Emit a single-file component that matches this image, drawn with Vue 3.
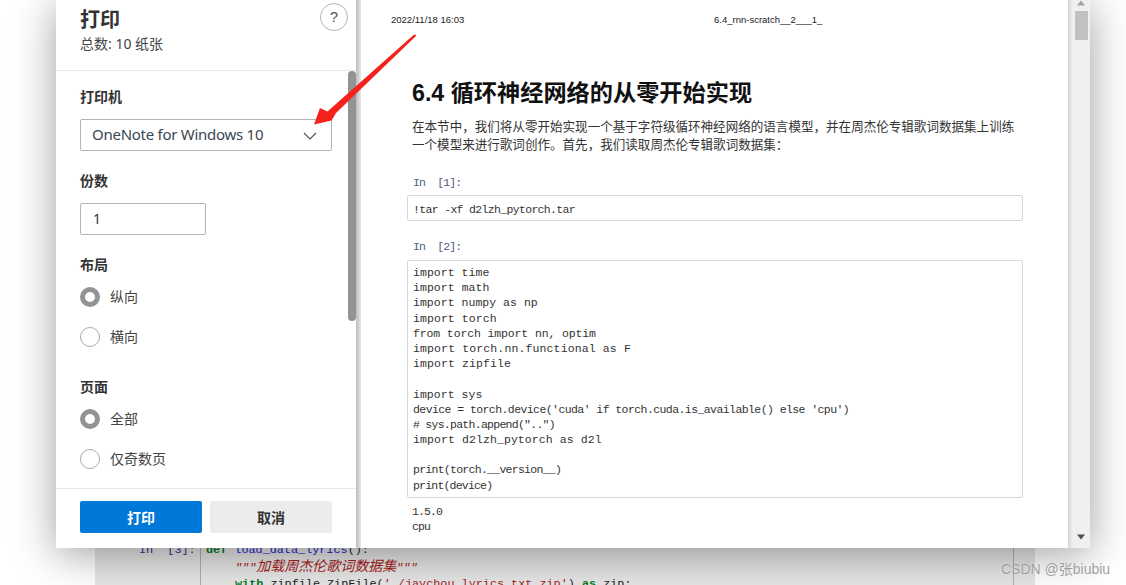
<script setup>
// Each source line with the x position where its text ends in the preview;
// letter-spacing is derived from that.
const baseAdvance = 6.9
const startX = 413
const codeLines = [
  ['import time', 489.3],
  ['import math', 489.5],
  ['import numpy as np', 537.7],
  ['import torch', 496.7],
  ['from torch import nn, optim', 595.7],
  ['import torch.nn.functional as F', 631],
  ['import zipfile', 511],
  ['', 0],
  ['import sys', 482.3],
  ["device = torch.device('cuda' if torch.cuda.is_available() else 'cpu')", 849],
  ['# sys.path.append("..")', 555],
  ['import d2lzh_pytorch as d2l', 601.7],
  ['', 0],
  ['print(torch.__version__)', 561],
  ['print(device)', 492.3]
].map(([text, end]) => ({
  text,
  spacing: text ? ((end - startX) / text.length - baseAdvance).toFixed(2) + 'px' : '0'
}))
</script>

<template>
  <div class="stage">
    <div class="back-page">
      <div class="back-code">
        <div class="back-prompt">In&nbsp;&nbsp;[3]:</div>
        <div class="back-src">
          <div><b class="kw">def</b> <span class="fn">load_data_lyrics</span>():</div>
          <div class="doc">"""<span class="doc-cjk">加载周杰伦歌词数据集</span>"""</div>
          <div class="ind"><b class="kw">with</b> zipfile.ZipFile(<span class="str">'./jaychou_lyrics.txt.zip'</span>) <b class="kw">as</b> zip:</div>
        </div>
      </div>
    </div>

    <div class="dialog">
      <aside class="panel">
        <header class="head">
          <div class="head-text">
            <h1 class="title">打印</h1>
            <div class="sub">总数: 10 纸张</div>
          </div>
          <div class="help">?</div>
        </header>
        <div class="body">
          <div class="label">打印机</div>
          <div class="select">
            <span class="select-text">OneNote for Windows 10</span>
            <svg class="chev" width="14" height="8" viewBox="0 0 14 8"><path d="M1 1l6 6 6-6" fill="none" stroke="#555" stroke-width="1.2"/></svg>
          </div>
          <div class="label">份数</div>
          <div class="input">1</div>
          <div class="label">布局</div>
          <div class="radios">
            <div class="radio-row"><i class="radio on"></i>纵向</div>
            <div class="radio-row"><i class="radio"></i>横向</div>
          </div>
          <div class="label wide">页面</div>
          <div class="radios">
            <div class="radio-row"><i class="radio on"></i>全部</div>
            <div class="radio-row"><i class="radio"></i>仅奇数页</div>
          </div>
          <div class="thumb"></div>
        </div>
        <footer class="foot">
          <button class="btn primary">打印</button>
          <button class="btn">取消</button>
        </footer>
      </aside>

      <div class="gutter"></div>

      <main class="preview">
        <div class="page-head">
          <span class="date">2022/11/18 16:03</span>
          <span class="doc-name">6.4_rnn-scratch__2___1_</span>
        </div>
        <h2 class="h-main">6.4 循环神经网络的从零开始实现</h2>
        <p class="para">在本节中，我们将从零开始实现一个基于字符级循环神经网络的语言模型，并在周杰伦专辑歌词数据集上训练一个模型来进行歌词创作。首先，我们读取周杰伦专辑歌词数据集：</p>
        <div class="prompt first">In&nbsp;&nbsp;[1]:</div>
        <div class="cell single">!tar -xf d2lzh_pytorch.tar</div>
        <div class="prompt second">In&nbsp;&nbsp;[2]:</div>
        <div class="cell multi">
          <div
            v-for="(line, i) in codeLines"
            :key="i"
            class="code-line"
            :style="{ letterSpacing: line.spacing }"
          >{{ line.text }}</div>
        </div>
        <div class="output">
          <div>1.5.0</div>
          <div>cpu</div>
        </div>
      </main>

      <div class="scrollbar">
        <svg width="10" height="6" viewBox="0 0 10 6" class="arrow-up"><path d="M5 0.5L9 5.5H1z" fill="#a3a3a3"/></svg>
        <div class="sb-thumb"></div>
        <svg width="10" height="6" viewBox="0 0 10 6" class="arrow-down"><path d="M1 .5h8L5 5.5z" fill="#505050"/></svg>
      </div>
    </div>

    <svg class="red-arrow" width="120" height="100" viewBox="310 30 120 100">
      <path d="M415.5 34.5L416 36L336 113L331.5 120.5L314 124.5L320 108L327.5 111.5L413.5 35z" fill="#f5221b"/>
    </svg>

    <div class="watermark">CSDN @张biubiu</div>
  </div>
</template>

<style>
html, body { margin: 0; background: #fff; }
</style>

<style scoped>
.stage {
  position: relative;
  width: 1126px;
  height: 585px;
  overflow: hidden;
  background: #fff;
  font-family: "Noto Sans", "Noto Sans CJK SC", sans-serif;
  color: #333;
}
.back-page {
  margin-left: 95px;
  width: 940px;
  height: 585px;
  background: #e6e6e6;
  box-sizing: border-box;
  padding-top: 542px;
}
.back-code {
  display: flex;
  font: 11.8px/16.5px "Liberation Mono", "Noto Sans CJK SC", monospace;
}
.back-prompt {
  width: 105px;
  flex: none;
  box-sizing: border-box;
  padding: 0 5px 0 44px;
  color: #26378c;
  white-space: nowrap;
}
.back-src {
  width: 814px;
  height: 60px;
  box-sizing: border-box;
  border-left: 1px solid #b0b0b0;
  border-right: 1px solid #b0b0b0;
  padding-left: 5px;
  color: #222;
  white-space: nowrap;
}
.kw { color: #0a7a2a; }
.fn { color: #1a1ad0; }
.doc { color: #a81c1c; font-style: italic; padding-left: 29px; }
.doc-cjk { font-size: 14px; }
.str { color: #a81c1c; }
.ind { padding-left: 29px; }

.dialog {
  position: absolute;
  left: 56px;
  top: 0;
  width: 1034px;
  height: 548px;
  display: flex;
  background: #fff;
  box-shadow: 0 6px 40px rgba(0, 0, 0, .38);
}
.panel {
  width: 300px;
  flex: none;
  display: flex;
  flex-direction: column;
  position: relative;
  background: #fff;
}
.gutter {
  width: 5px;
  flex: none;
  background: linear-gradient(90deg, #bdbdbd, #e6e6e6);
}
.head {
  height: 71px;
  box-sizing: border-box;
  padding: 7px 8px 0 24px;
  display: flex;
  justify-content: space-between;
  align-items: flex-start;
  border-bottom: 1px solid #e8e8e8;
  flex: none;
}
.title {
  margin: 0;
  font-size: 20px;
  line-height: 26px;
  font-weight: 700;
}
.sub {
  font-size: 14px;
  line-height: 20px;
  margin-top: 1px;
  color: #444;
}
.help {
  width: 26px;
  height: 26px;
  border: 1px solid #b4b4b4;
  border-radius: 50%;
  margin-top: -4px;
  text-align: center;
  font: 15px/26px "Liberation Sans", sans-serif;
  color: #555;
}
.body {
  flex: 1;
  min-height: 0;
  position: relative;
  padding: 16px 24px 0;
  box-sizing: border-box;
}
.label {
  font-size: 14px;
  line-height: 20px;
  font-weight: 700;
  margin: 20px 0 12px;
}
.label:first-child { margin-top: 0; }
.label.wide { margin-top: 30px; }
.select {
  width: 252px;
  height: 32px;
  box-sizing: border-box;
  border: 1px solid #b4b4b4;
  border-radius: 2px;
  display: flex;
  align-items: center;
  justify-content: space-between;
  padding: 0 14px 0 11px;
  font-size: 15px;
  letter-spacing: -.27px;
  color: #3b4650;
}
.select-text { margin-top: -2px; }
.chev { margin-top: 2px; }
.input {
  width: 126px;
  height: 32px;
  box-sizing: border-box;
  border: 1px solid #b4b4b4;
  border-radius: 2px;
  padding-left: 12px;
  font-size: 14px;
  line-height: 30px;
}
.radios {
  display: flex;
  flex-direction: column;
  gap: 20px;
}
.radio-row {
  display: flex;
  align-items: center;
  gap: 10px;
  height: 20px;
  font-size: 14px;
  line-height: 18px;
  color: #444;
}
.radio {
  width: 20px;
  height: 20px;
  box-sizing: border-box;
  border: 1px solid #aaa;
  border-radius: 50%;
  flex: none;
}
.radio.on { border: 5px solid #939393; }
.thumb {
  position: absolute;
  right: 0;
  top: 0;
  width: 8px;
  height: 250px;
  background: #939393;
  border-radius: 4px;
}
.foot {
  height: 60px;
  flex: none;
  box-sizing: border-box;
  border-top: 1px solid #e8e8e8;
  padding: 12px 24px 0;
  display: flex;
  gap: 8px;
}
.btn {
  width: 122px;
  height: 32px;
  border: 0;
  border-radius: 2px;
  background: #ececec;
  color: #333;
  font: 700 14px "Noto Sans", "Noto Sans CJK SC", sans-serif;
  padding: 0;
}
.btn.primary { background: #0078d7; color: #fff; }

.preview {
  flex: 1;
  min-width: 0;
  box-sizing: border-box;
  padding: 14px 0 0 51px;
  overflow: hidden;
  color: #222;
}
.page-head {
  display: flex;
  font: 9.5px/12px "Liberation Sans", sans-serif;
  color: #222;
  margin-left: -21px;
}
.date { width: 323px; flex: none; }
.h-main {
  margin: 47px 0 0;
  font: 700 23.2px/40px "Liberation Sans", "Noto Sans CJK SC", sans-serif;
  color: #111;
}
.para {
  margin: 5px 0 0;
  width: 606px;
  font: 12.55px/18px "Liberation Sans", "Noto Sans CJK SC", sans-serif;
  color: #333;
}
.prompt {
  font: 11.5px/15px "Liberation Mono", monospace;
  letter-spacing: -.85px;
  color: #505a78;
  padding-left: 1px;
}
.prompt.first { margin-top: 21px; }
.prompt.second { margin-top: 18px; }
.cell {
  width: 616px;
  margin-left: -5px;
  box-sizing: border-box;
  border: 1px solid #d8d8d8;
  border-radius: 2px;
  padding-left: 5px;
  font: 11.5px/15.2px "Liberation Mono", monospace;
  color: #333;
}
.cell.single { margin-top: 5px; height: 26px; line-height: 27px; letter-spacing: -.67px; }
.cell.multi { margin-top: 6px; height: 238px; padding-top: 4px; }
.code-line { height: 15.2px; white-space: pre; }
.output {
  margin-top: 6px;
  font: 11.5px/15.2px "Liberation Mono", monospace;
  letter-spacing: -.9px;
  color: #333;
}
.scrollbar {
  width: 22px;
  flex: none;
  position: relative;
  background: linear-gradient(90deg, #d4d4d4, #f0f0f0 5px);
}
.arrow-up { position: absolute; left: 8px; top: 0; }
.arrow-down { position: absolute; left: 8px; bottom: 8px; }
.sb-thumb {
  position: absolute;
  left: 7px;
  top: 11px;
  width: 13px;
  height: 29px;
  background: #c1c1c1;
}
.red-arrow { position: absolute; left: 310px; top: 30px; z-index: 2; }
.watermark {
  position: absolute;
  left: 1001px;
  top: 560px;
  font: 14px/18px "Liberation Sans", "Noto Sans CJK SC", sans-serif;
  color: rgba(140, 140, 140, .85);
  text-shadow: 0 0 1px rgba(255,255,255,.8);
}
</style>
